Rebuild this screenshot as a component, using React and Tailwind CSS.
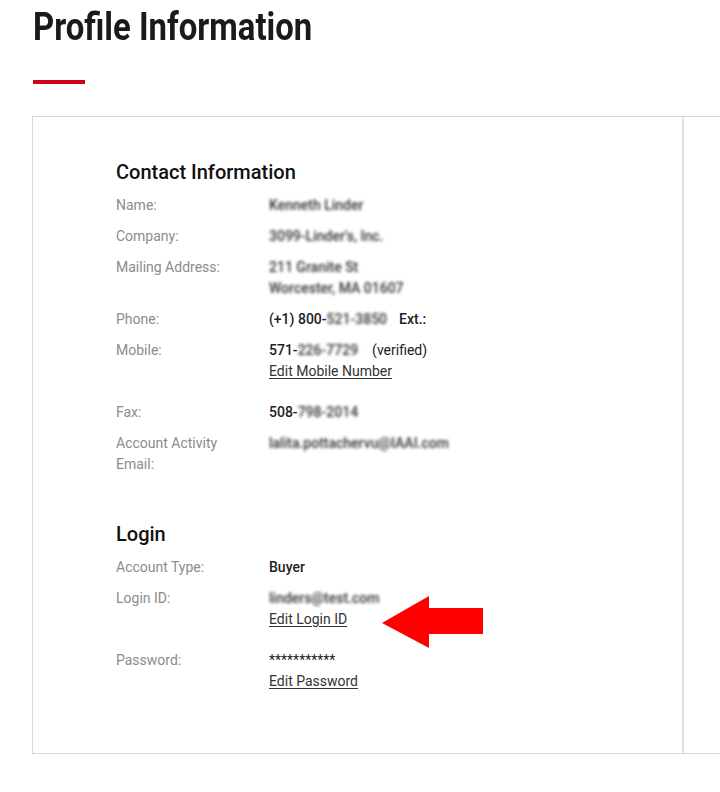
const labelCls = "w-[153px] shrink-0 text-[#8c8c8c]";
const blurCls = "blur-[1.6px] text-[#333] font-medium";

function Row({ label, children, className = "" }) {
  return (
    <div className={`flex leading-[21px] ${className}`}>
      <div className={labelCls}>{label}</div>
      <div className="flex-1">{children}</div>
    </div>
  );
}

export default function App() {
  return (
    <div className="w-[720px] h-[792px] overflow-hidden bg-white font-['Roboto',sans-serif] text-[14px] text-[#222]">
      <div className="pl-[33px] pt-[4px]">
        <h1 className="text-[38px] font-bold leading-[46px] text-[#1a1a1a] origin-left scale-x-[0.865] whitespace-nowrap">
          Profile Information
        </h1>
        <div className="mt-[30px] h-[4px] w-[52px] bg-[#d0021b]" />
      </div>

      <div className="ml-[32px] mt-[32px] flex w-[760px] h-[638px] border border-[#d9d9d9]">
        <div className="relative w-[651px] shrink-0 border-r-2 border-[#e2e2e2] pl-[83px] pt-[42px]">
          <h2 className="text-[20px] font-medium leading-[26px] text-[#111] mb-[10px]">
            Contact Information
          </h2>
          <div className="flex flex-col gap-[10px]">
            <Row label="Name:">
              <span className={blurCls}>Kenneth Linder</span>
            </Row>
            <Row label="Company:">
              <span className={blurCls}>3099-Linder's, Inc.</span>
            </Row>
            <Row label="Mailing Address:">
              <div className={blurCls}>211 Granite St</div>
              <div className={blurCls}>Worcester, MA 01607</div>
            </Row>
            <Row label="Phone:">
              <span className="font-medium">(+1) 800-</span>
              <span className={blurCls}>521-3850</span>
              <span className="ml-[12px] font-medium">Ext.:</span>
            </Row>
            <Row label="Mobile:" className="mb-[10px]">
              <div>
                <span className="font-medium">571-</span>
                <span className={blurCls}>226-7729</span>
                <span className="ml-[14px]">(verified)</span>
              </div>
              <a href="#" className="underline underline-offset-2 text-[#333]">
                Edit Mobile Number
              </a>
            </Row>
            <Row label="Fax:">
              <span className="font-medium">508-</span>
              <span className={blurCls}>798-2014</span>
            </Row>
            <Row label={<>Account Activity<br />Email:</>}>
              <span className={blurCls}>lalita.pottachervu@IAAI.com</span>
            </Row>
          </div>

          <h2 className="mt-[46px] text-[20px] font-medium leading-[26px] text-[#111] mb-[10px]">
            Login
          </h2>
          <div className="flex flex-col gap-[10px]">
            <Row label="Account Type:">
              <span className="font-medium">Buyer</span>
            </Row>
            <Row label="Login ID:" className="mb-[10px]">
              <div className={blurCls}>linders@test.com</div>
              <a href="#" className="underline underline-offset-2 text-[#333]">
                Edit Login ID
              </a>
            </Row>
            <Row label="Password:">
              <div>***********</div>
              <a href="#" className="underline underline-offset-2 text-[#333]">
                Edit Password
              </a>
            </Row>
          </div>

          {/* red arrow annotation */}
          <svg
            className="absolute left-[349px] top-[479px]"
            width="104"
            height="54"
            viewBox="0 0 104 54"
          >
            <polygon
              points="0,27 47,0 47,12 101,12 101,38 47,38 47,52"
              fill="#ff0000"
            />
          </svg>
        </div>
        <div className="flex-1" />
      </div>
    </div>
  );
}
